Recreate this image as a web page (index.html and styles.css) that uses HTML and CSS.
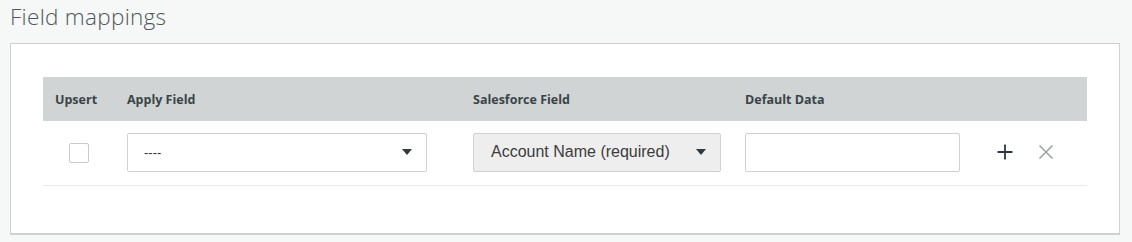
FILE: index.html
```html
<!DOCTYPE html>
<html lang="en">
<head>
    <meta charset="UTF-8">
    <meta name="viewport" content="width=device-width, initial-scale=1.0">
    <title>Field mappings</title>
    <link rel="stylesheet" href="styles.css">
</head>
<body>
    <div class="section">
        <h2 class="section-title">Field mappings</h2>
        <div class="panel">
            <table class="mappings">
                <thead>
                    <tr>
                        <th class="col-upsert">Upsert</th>
                        <th class="col-apply">Apply Field</th>
                        <th class="col-sf">Salesforce Field</th>
                        <th class="col-default">Default Data</th>
                        <th class="col-actions"></th>
                    </tr>
                </thead>
                <tbody>
                    <tr>
                        <td class="col-upsert"><span class="checkbox"></span></td>
                        <td class="col-apply">
                            <div class="select">
                                <span class="select-text">----</span>
                                <span class="caret"></span>
                            </div>
                        </td>
                        <td class="col-sf">
                            <div class="select select-grey">
                                <span class="select-text">Account Name (required)</span>
                                <span class="caret"></span>
                            </div>
                        </td>
                        <td class="col-default"><div class="text-input"></div></td>
                        <td class="col-actions">
                            <div class="actions">
                                <svg class="icon-add" width="18" height="18" viewBox="0 0 18 18">
                                    <path d="M9 1.5v15M1.5 9h15" stroke="#2f3a40" stroke-width="1.8" fill="none"/>
                                </svg>
                                <svg class="icon-remove" width="16" height="16" viewBox="0 0 16 16">
                                    <path d="M1.5 1.5l13 13M14.5 1.5l-13 13" stroke="#9ea3a6" stroke-width="1.6" fill="none"/>
                                </svg>
                            </div>
                        </td>
                    </tr>
                </tbody>
            </table>
        </div>
    </div>
</body>
</html>
```

FILE: styles.css
```css
body {
    margin: 0;
    background: #f6f8f7;
    font-family: 'Open Sans', 'Noto Sans', sans-serif;
    color: #333;
}
.section {
    padding: 0 12px 6px 10px;
}
.section-title {
    margin: 0;
    padding-top: 1px;
    height: 42px;
    font-size: 22.5px;
    font-weight: 300;
    color: #50575c;
    letter-spacing: 0.3px;
}
.panel {
    background: #fff;
    border: 1px solid #cfd1d1;
    border-bottom-width: 2px;
    padding: 33px 32px 47px 32px;
}
.mappings {
    width: 100%;
    border-collapse: collapse;
}
.mappings th {
    background: #d0d4d5;
    height: 44px;
    padding: 0 12px;
    text-align: left;
    font-size: 12.5px;
    font-weight: 700;
    color: #3a4448;
}
.mappings td {
    height: 62px;
    padding: 0 12px 2px;
    border-bottom: 1px solid #e9eaea;
    vertical-align: middle;
}
.col-upsert {
    width: 48px;
}
.mappings td.col-upsert {
    text-align: center;
}
.col-apply {
    width: 322px;
}
.col-sf {
    width: 248px;
}
.col-default {
    width: 215px;
}
.checkbox {
    display: inline-block;
    width: 18px;
    height: 18px;
    border: 1px solid #c8cbcc;
    border-radius: 2px;
    vertical-align: middle;
}
.select {
    display: flex;
    align-items: center;
    justify-content: space-between;
    box-sizing: border-box;
    width: 300px;
    height: 39px;
    padding: 0 14px 0 16px;
    border: 1px solid #cfd1d1;
    border-radius: 2px;
    background: #fff;
    font-family: 'Liberation Sans', Arial, sans-serif;
    font-size: 13px;
    color: #333;
}
.select-grey {
    width: 248px;
    background: #eeeeee;
    font-size: 16px;
    padding: 0 14px 0 17px;
    color: #3c3c3c;
}
.caret {
    width: 0;
    height: 0;
    border-left: 5px solid transparent;
    border-right: 5px solid transparent;
    border-top: 6px solid #2f3a40;
}
.text-input {
    box-sizing: border-box;
    width: 215px;
    height: 39px;
    border: 1px solid #cfd1d1;
    border-radius: 2px;
    background: #fff;
}
.actions {
    display: flex;
    align-items: center;
    gap: 24px;
    padding-left: 12px;
}
```
